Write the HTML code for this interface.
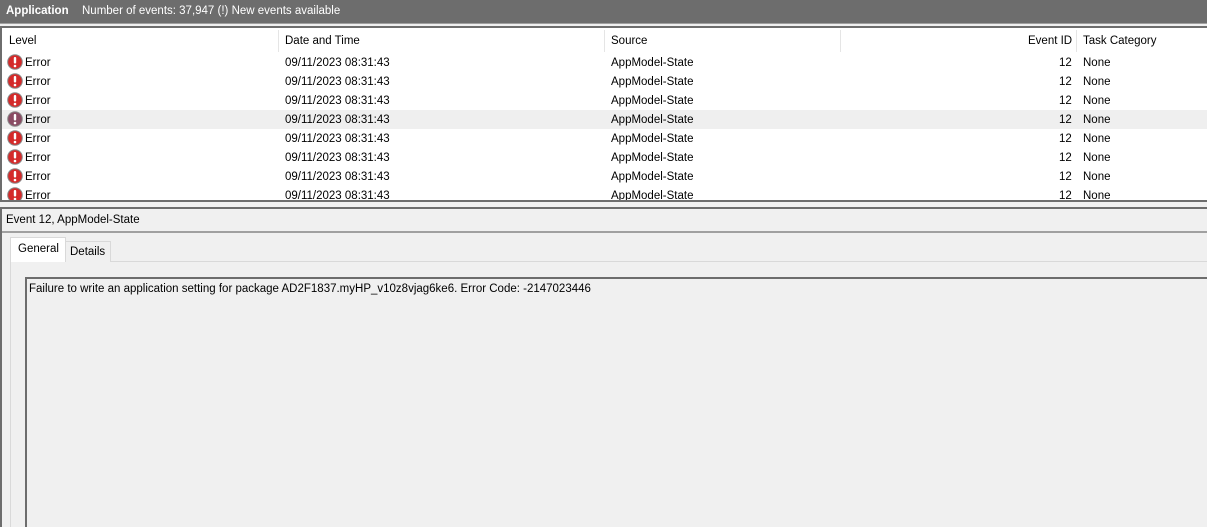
<!DOCTYPE html>
<html><head><style>
*{margin:0;padding:0;box-sizing:border-box}
body{width:1207px;height:527px;overflow:hidden;background:#f0f0f0;font-family:"Liberation Sans",sans-serif;font-size:11.5px;color:#000;position:relative}
.a{position:absolute}
.t{white-space:nowrap}
</style></head><body>
<div class="a" style="left:0;top:0;width:1207px;height:23px;background:#6d6d6d"></div>
<div class="a t" style="left:6px;top:5px;color:#fff;font-weight:bold;font-size:11.5px">Application</div>
<div class="a t" style="left:82px;top:5px;color:#fff">Number of events: 37,947 (!) New events available</div>
<div class="a" style="left:0;top:23px;width:1207px;height:1px;background:#a0a0a0"></div>
<div class="a" style="left:0;top:25px;width:1207px;height:1px;background:#f0f0f0"></div>
<div class="a" style="left:0;top:26px;width:1207px;height:2px;background:#6d6d6d"></div>
<div class="a" style="left:0;top:28px;width:1207px;height:172px;background:#fff;border-left:2px solid #6d6d6d;overflow:hidden">
<div class="a" style="left:276px;top:2px;width:1px;height:22px;background:#e5e5e5"></div>
<div class="a" style="left:602px;top:2px;width:1px;height:22px;background:#e5e5e5"></div>
<div class="a" style="left:838px;top:2px;width:1px;height:22px;background:#e5e5e5"></div>
<div class="a" style="left:1074px;top:2px;width:1px;height:22px;background:#e5e5e5"></div>
<div class="a t" style="left:7px;top:7px">Level</div>
<div class="a t" style="left:283px;top:7px">Date and Time</div>
<div class="a t" style="left:609px;top:7px">Source</div>
<div class="a t" style="left:1026px;top:7px">Event ID</div>
<div class="a t" style="left:1081px;top:7px">Task Category</div>
<div id="rows"></div>
</div>
<div class="a" style="left:0;top:200px;width:1207px;height:2px;background:#6d6d6d"></div>
<div class="a" style="left:0;top:207px;width:1207px;height:2px;background:#6d6d6d"></div>
<div class="a" style="left:0;top:209px;width:2px;height:318px;background:#6d6d6d"></div>
<div class="a t" style="left:6px;top:214px">Event 12, AppModel-State</div>
<div class="a" style="left:2px;top:231px;width:1205px;height:2px;background:#a0a0a0"></div>
<div class="a" style="left:10px;top:261px;width:1197px;height:266px;border-left:1px solid #d9d9d9;border-top:1px solid #d9d9d9"></div>
<div class="a" style="left:65px;top:241px;width:46px;height:21px;border:1px solid #d9d9d9;border-bottom:none;background:#f0f0f0"></div>
<div class="a t" style="left:70px;top:246px">Details</div>
<div class="a" style="left:10px;top:237px;width:56px;height:25px;background:#fff;border:1px solid #d9d9d9;border-bottom:none"></div>
<div class="a t" style="left:18px;top:243px">General</div>
<div class="a" style="left:25px;top:277px;width:1182px;height:250px;border-left:2px solid #6d6d6d;border-top:2px solid #6d6d6d"></div>
<div class="a t" style="left:29px;top:283px">Failure to write an application setting for package AD2F1837.myHP_v10z8vjag6ke6. Error Code: -2147023446</div>
<script>
var h='';for(var i=0;i<8;i++){var y=25+i*19;var sel=i==3;
h+='<div class="a" style="left:0;top:'+y+'px;width:1207px;height:19px;'+(sel?'background:#efefef;':'')+'"></div>';
h+='<svg class="a" style="left:5px;top:'+(y+1)+'px" width="16" height="16"><circle cx="8" cy="8" r="7.3" fill="'+(sel?'#8a4b63':'#d42a2a')+'" stroke="#8a8a8a" stroke-width="1"/><rect x="6.8" y="3" width="2.4" height="6.5" rx="1" fill="#fff"/><circle cx="8" cy="12" r="1.3" fill="#fff"/></svg>';
h+='<div class="a t" style="left:23px;top:'+(y+4)+'px">Error</div>';
h+='<div class="a t" style="left:283px;top:'+(y+4)+'px">09/11/2023 08:31:43</div>';
h+='<div class="a t" style="left:609px;top:'+(y+4)+'px">AppModel-State</div>';
h+='<div class="a t" style="left:1057px;top:'+(y+4)+'px">12</div>';
h+='<div class="a t" style="left:1081px;top:'+(y+4)+'px">None</div>';}
document.getElementById('rows').innerHTML=h;
</script>
</body></html>
